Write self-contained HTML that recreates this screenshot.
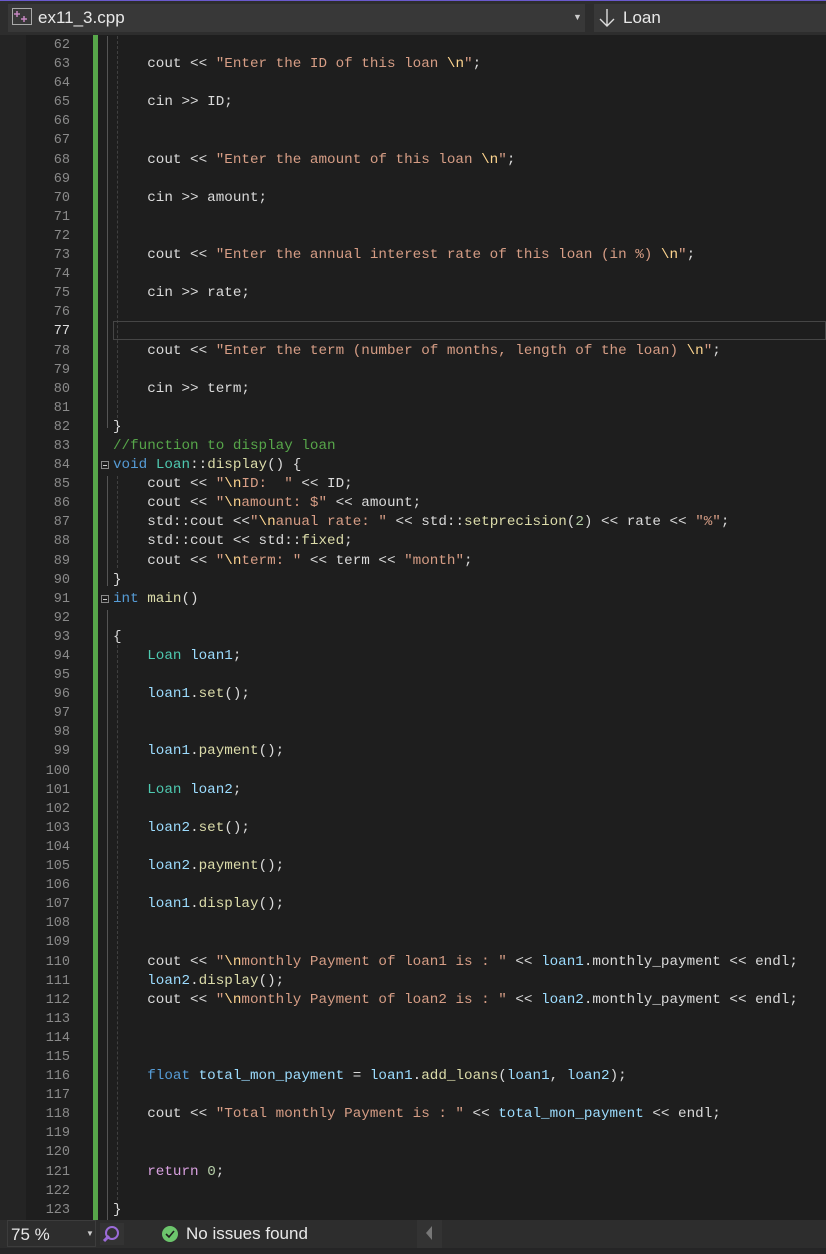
<!DOCTYPE html>
<html><head><meta charset="utf-8"><style>
body{margin:0;width:826px;height:1254px;background:#1e1e1e;overflow:hidden;position:relative;font-family:"Liberation Sans",sans-serif}
.top{position:absolute;left:0;top:0;width:826px;height:35px;background:#2d2d2d;border-top:1px solid #6a5acd;box-sizing:border-box}
.dd{position:absolute;top:3px;height:28px;background:#383838;color:#e8e8e8;font-size:17px;line-height:28px}
.lm{position:absolute;left:0;top:35px;width:26px;height:1185px;background:#242424}
.gut{position:absolute;left:26px;top:35px;width:66px;height:1185px;background:#1e1e1e}
.green{position:absolute;left:93px;top:35px;width:5px;height:1185px;background:#57a64a}
.nums{position:absolute;left:26px;top:36px;width:44px;text-align:right;color:#8a8a8a;font-family:"Liberation Mono",monospace;font-size:13.5px;line-height:19.1px;margin:0}
pre.code{position:absolute;left:113px;top:36px;margin:0;color:#dadada;font-family:"Liberation Mono",monospace;font-size:14.27px;line-height:19.1px}
.k{color:#569cd6}.t{color:#4ec9b0}.f{color:#dcdcaa}.s{color:#d69d85}.e{color:#ffd68f}.c{color:#57a64a}.v{color:#9cdcfe}.p{color:#d8a0df}.n{color:#b5cea8}
.cur{position:absolute;left:113px;top:321px;width:713px;height:19px;border:1px solid #464646;box-sizing:border-box}
.guide{position:absolute;left:117px;border-left:1px dashed #404040}
.br{position:absolute;left:107px;border-left:1px solid #555;}
.fold{position:absolute;left:101px;width:8px;height:8px;border:1px solid #888;box-sizing:border-box}
.fold:after{content:"";position:absolute;left:1px;top:3px;width:4px;height:1px;background:#ccc}
.status{position:absolute;left:0;top:1220px;width:826px;height:28px;background:#2d2d2d;font-size:17px;color:#e8e8e8}
.bot{position:absolute;left:0;top:1248px;width:826px;height:6px;background:#252526}
</style></head><body>
<div class="top">
<div class="dd" style="left:8px;width:577px"><svg style="position:absolute;left:4px;top:4px" width="20" height="17"><rect x="0.5" y="0.5" width="19" height="16" fill="none" stroke="#aaa"/><path d="M5 3v6M2 6h6M12 8v6M9 11h6" stroke="#c586c0" stroke-width="1.5"/></svg><span style="position:absolute;left:30px;top:0">ex11_3.cpp</span><span style="position:absolute;left:565px;top:-1px;font-size:9px;color:#ccc">▼</span></div>
<div class="dd" style="left:594px;width:232px"><svg style="position:absolute;left:4px;top:4px" width="18" height="20"><path d="M9 1v17M2 11l7 7 7-7" stroke="#ddd" stroke-width="1.4" fill="none"/></svg><span style="position:absolute;left:29px">Loan</span></div>
</div>
<div class="lm"></div><div class="gut"></div><div class="green"></div>
<pre class="nums">62
63
64
65
66
67
68
69
70
71
72
73
74
75
76
<span style="color:#e0e0e0">77</span>
78
79
80
81
82
83
84
85
86
87
88
89
90
91
92
93
94
95
96
97
98
99
100
101
102
103
104
105
106
107
108
109
110
111
112
113
114
115
116
117
118
119
120
121
122
123</pre>
<div class="br" style="top:36px;height:392px"></div>
<div class="guide" style="top:36px;height:382px"></div>
<div class="br" style="top:476px;height:110px"></div>
<div class="guide" style="top:476px;height:92px"></div>
<div class="br" style="top:610px;height:610px"></div>
<div class="guide" style="top:645px;height:555px"></div>
<div class="fold" style="top:461px"></div>
<div class="fold" style="top:595px"></div>
<div class="cur"></div>
<pre class="code">

    cout &lt;&lt; <span class="s">"Enter the ID of this loan </span><span class="e">\n</span><span class="s">"</span>;

    cin &gt;&gt; ID;


    cout &lt;&lt; <span class="s">"Enter the amount of this loan </span><span class="e">\n</span><span class="s">"</span>;

    cin &gt;&gt; amount;


    cout &lt;&lt; <span class="s">"Enter the annual interest rate of this loan (in %) </span><span class="e">\n</span><span class="s">"</span>;

    cin &gt;&gt; rate;


    cout &lt;&lt; <span class="s">"Enter the term (number of months, length of the loan) </span><span class="e">\n</span><span class="s">"</span>;

    cin &gt;&gt; term;

}
<span class="c">//function to display loan</span>
<span class="k">void</span> <span class="t">Loan</span>::<span class="f">display</span>() {
    cout &lt;&lt; <span class="s">"</span><span class="e">\n</span><span class="s">ID:  "</span> &lt;&lt; ID;
    cout &lt;&lt; <span class="s">"</span><span class="e">\n</span><span class="s">amount: $"</span> &lt;&lt; amount;
    std::cout &lt;&lt;<span class="s">"</span><span class="e">\n</span><span class="s">anual rate: "</span> &lt;&lt; std::<span class="f">setprecision</span>(<span class="n">2</span>) &lt;&lt; rate &lt;&lt; <span class="s">"%"</span>;
    std::cout &lt;&lt; std::<span class="f">fixed</span>;
    cout &lt;&lt; <span class="s">"</span><span class="e">\n</span><span class="s">term: "</span> &lt;&lt; term &lt;&lt; <span class="s">"month"</span>;
}
<span class="k">int</span> <span class="f">main</span>()

{
    <span class="t">Loan</span> <span class="v">loan1</span>;

    <span class="v">loan1</span>.<span class="f">set</span>();


    <span class="v">loan1</span>.<span class="f">payment</span>();

    <span class="t">Loan</span> <span class="v">loan2</span>;

    <span class="v">loan2</span>.<span class="f">set</span>();

    <span class="v">loan2</span>.<span class="f">payment</span>();

    <span class="v">loan1</span>.<span class="f">display</span>();


    cout &lt;&lt; <span class="s">"</span><span class="e">\n</span><span class="s">monthly Payment of loan1 is : "</span> &lt;&lt; <span class="v">loan1</span>.monthly_payment &lt;&lt; endl;
    <span class="v">loan2</span>.<span class="f">display</span>();
    cout &lt;&lt; <span class="s">"</span><span class="e">\n</span><span class="s">monthly Payment of loan2 is : "</span> &lt;&lt; <span class="v">loan2</span>.monthly_payment &lt;&lt; endl;



    <span class="k">float</span> <span class="v">total_mon_payment</span> = <span class="v">loan1</span>.<span class="f">add_loans</span>(<span class="v">loan1</span>, <span class="v">loan2</span>);

    cout &lt;&lt; <span class="s">"Total monthly Payment is : "</span> &lt;&lt; <span class="v">total_mon_payment</span> &lt;&lt; endl;


    <span class="p">return</span> <span class="n">0</span>;

}</pre>
<div class="status">
<div style="position:absolute;left:7px;top:0;width:89px;height:27px;border:1px solid #3c3c3c;box-sizing:border-box;line-height:27px;padding-left:3px">75 %<span style="position:absolute;left:78px;top:-1px;font-size:8px;color:#ccc">▼</span></div>
<div style="position:absolute;left:100px;top:3px;width:24px;height:22px;background:#333"><svg width="22" height="22"><circle cx="12" cy="10" r="6" fill="none" stroke="#9b6bd8" stroke-width="2"/><path d="M4 18l5-5" stroke="#9b6bd8" stroke-width="3"/></svg></div>
<svg style="position:absolute;left:161px;top:5px" width="18" height="18"><circle cx="9" cy="9" r="8" fill="#6cc56c"/><path d="M5 9l3 3 5-6" stroke="#1e1e1e" stroke-width="1.6" fill="none"/></svg>
<span style="position:absolute;left:186px;top:0;line-height:28px">No issues found</span>
<div style="position:absolute;left:417px;top:0;width:25px;height:28px;background:#333"><span style="position:absolute;left:9px;top:6px;width:0;height:0;border-top:7px solid transparent;border-bottom:7px solid transparent;border-right:6px solid #777"></span></div>
</div>
<div class="bot"></div>
</body></html>
